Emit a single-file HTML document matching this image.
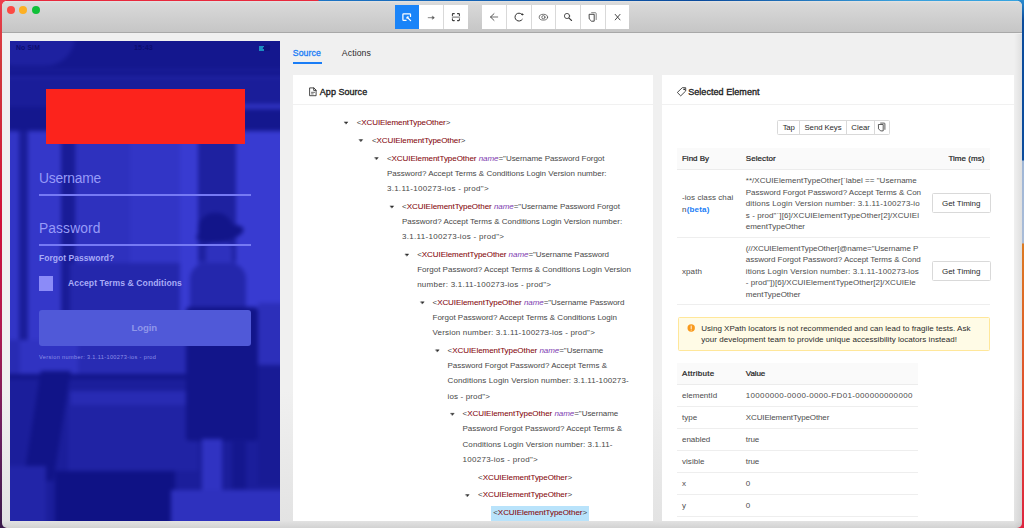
<!DOCTYPE html>
<html lang="en">
<head>
<meta charset="utf-8">
<title>Appium Inspector</title>
<style>
*{box-sizing:border-box;margin:0;padding:0}
html,body{width:1024px;height:528px;overflow:hidden}
body{position:relative;font-family:"Liberation Sans",sans-serif;background:#c8283c}
.abs,.l{position:absolute}
.l{white-space:nowrap}
.desk-l{left:0;top:0;width:6px;height:528px;background:linear-gradient(#ec3c4c 0,#d03a3c 12%,#d0103a 42%,#b01a50 62%,#6a2060 82%,#3a1a4a 100%)}
.desk-t{left:0;top:0;width:1024px;height:4px;background:linear-gradient(90deg,#e8283c 0,#e8283c 318px,#1c74c4 319px,#0a4a9c 700px,#3aa0dc 900px,#35a4e0 100%)}
.desk-r{right:0;top:0;width:6px;height:528px;background:linear-gradient(#2a8cd0 0,#0b4c9c 20px,#0b4c9c 160px,#9fb6d6 161px,#a9bcd8 243px,#dc7a22 244px,#e0552c 380px,#de2440 100%)}
.win{left:2px;top:1px;width:1020px;height:527px;border-radius:5px 5px 5px 5px;background:linear-gradient(#f0f0f0 0,#f0f0f0 74%,#e3e3e3 98.6%,#d2d2d2 100%);overflow:hidden}
.tb{left:0;top:0;width:1020px;height:32px;background:linear-gradient(#e3e3e3 0,#d9d9d9 2px,#c6c6c6 100%);border-bottom:1px solid #a8a8a8}
.dot{width:8px;height:8px;border-radius:50%;top:5px}
.btn{top:4px;height:24px;background:#fff;border-right:1px solid #d9d9d9}
.card{background:#fff}
.hr{height:1px;background:#eee}
.botshade{left:0;top:520px;width:1020px;height:8px;background:linear-gradient(#e4e4e4,#d0d0d0)}
.gt{width:59.2px;height:20px;border:1px solid #d9d9d9;border-radius:1.5px;background:#fff}
.c-blue{color:#1a7df6;-webkit-text-stroke:.3px #1a7df6}
.c-dk{color:#2b2b2b}
.c-hd{color:#1f1f1f;-webkit-text-stroke:.35px #1f1f1f}
.c-th{color:#1f1f1f;-webkit-text-stroke:.22px #1f1f1f}
.c-p{color:#4d4d4d}
.c-ph1{color:#979bf8}
.c-ph2{color:#a9abf6;font-weight:700}
.c-ph3{color:#8f96ea;font-weight:700}
.c-ph4{color:#8d90e8}
.c-ph5{color:#0c0c72;font-weight:700}
.s-p{color:#474747}
.s-t{color:#86090f;-webkit-text-stroke:.08px #86090f}
.s-a{color:#7d3bb0;font-style:italic}
.s-beta{color:#1a7df6;font-weight:700}
</style>
</head>
<body>
<div class="abs desk-t"></div>
<div class="abs desk-l"></div>
<div class="abs desk-r"></div>
<div class="abs win">
  <div class="abs tb"></div>
  <div class="abs dot" style="left:4.5px;background:#fc4a44"></div>
  <div class="abs dot" style="left:17.4px;background:#fdb024"></div>
  <div class="abs dot" style="left:29.8px;background:#10c038"></div>
  <!-- toolbar group 1 -->
  <div class="abs btn" style="left:392.5px;width:24.2px;background:#1a84f8;border-color:#1a84f8"></div>
  <div class="abs btn" style="left:416.7px;width:25px"></div>
  <div class="abs btn" style="left:441.7px;width:24.4px;border-right:0"></div>
  <!-- toolbar group 2 -->
  <div class="abs btn" style="left:479.7px;width:25.3px"></div>
  <div class="abs btn" style="left:505px;width:24.6px"></div>
  <div class="abs btn" style="left:529.6px;width:24.2px"></div>
  <div class="abs btn" style="left:553.8px;width:25.1px"></div>
  <div class="abs btn" style="left:578.9px;width:24.8px"></div>
  <div class="abs btn" style="left:603.7px;width:23.8px;border-right:0"></div>
  <!--ICONS-->
    <div class="abs" style="left:1012px;top:33px;width:8px;height:494px;background:linear-gradient(90deg,rgba(0,0,0,0),rgba(0,0,0,.07))"></div>
  <!-- phone -->
  <div class="abs" id="phone" style="left:8px;top:40px;width:270px;height:480px;background:#1a1d99;overflow:hidden">
<div class="abs" style="left:0;top:0;width:270px;height:480px;filter:blur(2.2px)"><div class="abs" style="left:-10px;top:-10px;width:290px;height:39px;background:#14178e;"></div><div class="abs" style="left:-5px;top:-5px;width:70px;height:30px;background:#1e21a0;border-radius:0 0 40px 10px"></div><div class="abs" style="left:-10px;top:29px;width:290px;height:8px;background:#2023a4;"></div><div class="abs" style="left:-10px;top:31px;width:290px;height:2.5px;background:#0e1183;"></div><div class="abs" style="left:-10px;top:37px;width:290px;height:29px;background:#1a1d99;"></div><div class="abs" style="left:-10px;top:66px;width:290px;height:24px;background:#14178e;"></div><div class="abs" style="left:150px;top:63px;width:130px;height:5px;background:#3033c2;"></div><div class="abs" style="left:-10px;top:90px;width:290px;height:213px;background:#282bb3;"></div><div class="abs" style="left:-10px;top:90px;width:20px;height:250px;background:#3235c6;"></div><div class="abs" style="left:9px;top:90px;width:9px;height:300px;background:#1a1d99;"></div><div class="abs" style="left:18px;top:90px;width:33px;height:250px;background:#3437c9;"></div><div class="abs" style="left:51px;top:90px;width:14px;height:215px;background:#191c97;"></div><div class="abs" style="left:66px;top:96px;width:104px;height:170px;background:#2e31be;"></div><div class="abs" style="left:120px;top:100px;width:52px;height:150px;background:#3235c6;"></div><div class="abs" style="left:60px;top:222px;width:112px;height:78px;background:#2427ac;"></div><div class="abs" style="left:170px;top:90px;width:18px;height:200px;background:#383bd1;"></div><div class="abs" style="left:188px;top:90px;width:38px;height:130px;background:#1e21a0;"></div><div class="abs" style="left:226px;top:90px;width:54px;height:190px;background:#383bd1;"></div><div class="abs" style="left:186px;top:184px;width:48px;height:17px;background:#12158a;border-radius:50%;transform:rotate(-10deg)"></div><div class="abs" style="left:188px;top:172px;width:35px;height:26px;background:#12158a;border-radius:16px 16px 2px 2px"></div><div class="abs" style="left:196px;top:202px;width:26px;height:22px;background:#2e31be;border-radius:6px"></div><div class="abs" style="left:-10px;top:299px;width:290px;height:36px;background:#282bb3;"></div><div class="abs" style="left:10px;top:299px;width:58px;height:36px;background:#3033c2;"></div><div class="abs" style="left:-10px;top:333px;width:200px;height:5px;background:#12158a;"></div><div class="abs" style="left:-10px;top:338px;width:290px;height:160px;background:#1b1e9b;"></div><div class="abs" style="left:60px;top:350px;width:125px;height:14px;background:#282bb3;"></div><div class="abs" style="left:58px;top:364px;width:130px;height:66px;background:#2023a4;"></div><div class="abs" style="left:45px;top:430px;width:120px;height:60px;background:#0f1285;"></div><div class="abs" style="left:22px;top:330px;width:30px;height:110px;background:#111488;transform:skewX(-9deg)"></div><div class="abs" style="left:-10px;top:425px;width:46px;height:70px;background:#2225a8;"></div><div class="abs" style="left:180px;top:222px;width:56px;height:60px;background:#2427ac;border-radius:16px 16px 0 0"></div><div class="abs" style="left:176px;top:266px;width:72px;height:134px;background:#12158a;border-radius:4px"></div><div class="abs" style="left:228px;top:300px;width:20px;height:60px;background:#12158a;"></div><div class="abs" style="left:192px;top:398px;width:20px;height:55px;background:#3033c2;"></div><div class="abs" style="left:222px;top:398px;width:14px;height:50px;background:#14178e;"></div><div class="abs" style="left:161px;top:449px;width:125px;height:45px;background:#2e31be;"></div><div class="abs" style="left:248px;top:262px;width:40px;height:62px;background:#2c2fba;"></div><div class="abs" style="left:248px;top:324px;width:40px;height:120px;background:#181b95;"></div></div><div class="abs" style="left:36px;top:47.8px;width:199.2px;height:54.9px;background:#fc231c;"></div><div class="abs" style="left:29px;top:152.6px;width:211.6px;height:2px;background:#767af4;"></div><div class="abs" style="left:29px;top:202.6px;width:211.6px;height:2px;background:#767af4;"></div><div class="abs" style="left:29px;top:235.4px;width:14.2px;height:14.2px;background:#8b8bf8;"></div><div class="abs" style="left:28.5px;top:269px;width:212.2px;height:36.2px;background:#5059d8;border-radius:3px"></div><div class="abs" style="left:252.5px;top:4.3px;width:7px;height:5.6px;background:#10127e;border-radius:1.2px"></div><div class="abs" style="left:249.3px;top:4.6px;width:4.6px;height:5px;background:#1b8cc2;"></div><div class="abs" style="left:252.6px;top:6px;width:1.6px;height:2.2px;background:#10127e;transform:skewX(-20deg)"></div>
  </div>
  <!-- tab underline -->
  <div class="abs" style="left:290.7px;top:61.1px;width:29.2px;height:2px;background:#1a7df6"></div>
  <!-- cards -->
  <div class="abs card" style="left:291px;top:73.5px;width:360px;height:446.5px"></div>
  <div class="abs hr" style="left:291px;top:103px;width:360px;background:#f1f1f1"></div>
  <div class="abs card" style="left:660px;top:73.5px;width:352px;height:446.5px"></div>
  <div class="abs hr" style="left:660px;top:103px;width:352px;background:#f1f1f1"></div>
  
<div class="abs" id="ov" style="left:-2px;top:-1px;width:1024px;height:528px">
  <!-- action button group -->
  <div class="abs" style="left:777.2px;top:120px;width:112.4px;height:14.6px;border:1px solid #d9d9d9;border-radius:1.5px;background:#fff"></div>
  <div class="abs" style="left:799.3px;top:120px;width:1px;height:14.6px;background:#d9d9d9"></div>
  <div class="abs" style="left:846.2px;top:120px;width:1px;height:14.6px;background:#d9d9d9"></div>
  <div class="abs" style="left:874.2px;top:120px;width:1px;height:14.6px;background:#d9d9d9"></div>
  <!-- selector table -->
  <div class="abs" style="left:677px;top:148px;width:312.5px;height:21.5px;background:#fafafa;border-bottom:1px solid #ececec"></div>
  <div class="abs hr" style="left:677px;top:236.8px;width:312.5px"></div>
  <div class="abs hr" style="left:677px;top:304.2px;width:312.5px"></div>
  <div class="abs gt" style="left:931.5px;top:193.2px"></div>
  <div class="abs gt" style="left:931.5px;top:261.4px"></div>
  <!-- alert -->
  <div class="abs" style="left:677.5px;top:317px;width:312px;height:33.6px;background:#fffbe6;border:1px solid #ffe79a;border-radius:1.5px"></div>
  <!-- attribute table -->
  <div class="abs" style="left:677px;top:362.5px;width:241px;height:22px;background:#fafafa;border-bottom:1px solid #ececec"></div>
  <div class="abs hr" style="left:677px;top:405.8px;width:241px"></div>
  <div class="abs hr" style="left:677px;top:427.8px;width:241px"></div>
  <div class="abs hr" style="left:677px;top:449.8px;width:241px"></div>
  <div class="abs hr" style="left:677px;top:471.8px;width:241px"></div>
  <div class="abs hr" style="left:677px;top:493.8px;width:241px"></div>
  <div class="abs hr" style="left:677px;top:515.8px;width:241px"></div>
  <!-- selected tree node -->
  <div class="abs" style="left:491.2px;top:505.5px;width:98.3px;height:15.5px;background:#b9e3fb"></div>
</div>

</div>
<div class="abs" id="txt" style="left:0;top:0;width:1024px;height:528px">
<svg class="abs" style="left:0;top:0" width="1024" height="528" viewBox="0 0 1024 528" fill="none" stroke-linecap="round" stroke-linejoin="round">
<g fill="#2e2e2e" stroke="#2e2e2e" stroke-width=".45"><path d="M344.50 121.90H347.90L346.20 123.90Z"/><path d="M359.30 139.60H362.70L361.00 141.60Z"/><path d="M374.90 157.60H378.30L376.60 159.60Z"/><path d="M390.30 205.90H393.70L392.00 207.90Z"/><path d="M405.30 254.00H408.70L407.00 256.00Z"/><path d="M420.80 301.80H424.20L422.50 303.80Z"/><path d="M435.80 349.80H439.20L437.50 351.80Z"/><path d="M450.80 413.30H454.20L452.50 415.30Z"/><path d="M465.80 494.60H469.20L467.50 496.60Z"/></g>
<g stroke="#fff" stroke-width="1.25"><path d="M406 20.4H403.6Q402.9 20.4 402.9 19.7V14.5Q402.9 13.8 403.6 13.8H409.8Q410.5 13.8 410.5 14.5V16.4"/><path d="M407.2 17.2L410.6 20.6"/><path d="M407 18.6V17H408.6" stroke-width=".9"/></g>
<g stroke="#666" stroke-width=".8"><path d="M428.2 17.7H433.6"/><path d="M432.6 16.3L434.4 17.7L432.6 19.1Z" fill="#555" stroke="#555" stroke-width=".5"/></g>
<g stroke="#3a3a3a" stroke-width="1.05"><path d="M452.4 15.4V14.2Q452.4 13.6 453 13.6H454.3"/><path d="M457.5 13.6H458.8Q459.4 13.6 459.4 14.2V15.4"/><path d="M452.4 18.8V20Q452.4 20.6 453 20.6H454.3"/><path d="M457.5 20.6H458.8Q459.4 20.6 459.4 20V18.8"/><path d="M452.2 17.1H459.7" stroke="#888"/></g>
<g stroke="#3a3a3a" stroke-width=".85"><path d="M490.6 17H497.7" stroke="#555"/><path d="M494 13.7L490.5 17L494 20.4"/></g>
<g stroke="#333" stroke-width="1"><path d="M522.3 19.4A4 4 0 1 1 521.9 14.3"/><circle cx="522.3" cy="14.4" r=".55" fill="#333"/></g>
<g stroke="#4a4a4a" stroke-width=".75"><ellipse cx="543.4" cy="17.2" rx="4.2" ry="2.9"/><circle cx="543.4" cy="17.2" r="1.6"/></g>
<g stroke="#3a3a3a" stroke-width=".85"><circle cx="567" cy="16" r="2.6"/><path d="M569 18.1L571.6 20.5" stroke-width="1.1"/></g>
<g stroke="#333" stroke-width=".9"><path d="M591.6 12.7H595.4Q596.2 12.7 596.2 13.5V19.6" stroke="#777"/><path d="M589.5 14.3H594.2V21.2H591.5L589.5 19.2Z"/></g>
<g stroke="#333" stroke-width=".9"><path d="M615.2 14.4L620 19.9M620 14.4L615.2 19.9"/></g>
<g stroke="#2a2a2a" stroke-width=".85"><path d="M310 87.9H313.9L316.1 90.1V95.7H310Z"/><path d="M313.7 88V90.4H316"/><path d="M311.5 92.3H314.6M311.5 93.9H313.2" stroke-width=".7"/></g>
<g stroke="#2a2a2a" stroke-width=".85"><path d="M677.6 92.2L682.3 87.7H685.7V91L681 95.6Z"/><circle cx="684.1" cy="89.3" r=".5"/></g>
<g stroke="#333" stroke-width=".8"><path d="M880.6 123.1H884.2Q884.9 123.1 884.9 123.8V129.4"/><path d="M878.8 124.5H883.2V130.9H880.6L878.8 129.1Z"/></g>
<circle cx="691.2" cy="328" r="3.7" fill="#f99a1c"/><path d="M691.2 326V328.6" stroke="#fff" stroke-width=".9"/><circle cx="691.2" cy="330" r=".5" fill="#fff"/>
</svg>
<div class="l c-tr" style="left:356.70px;top:117.00px;font-size:8.0px;line-height:12px;letter-spacing:-0.075px"><span class="s-p">&lt;</span><span class="s-t">XCUIElementTypeOther</span><span class="s-p">&gt;</span></div>
<div class="l c-tr" style="left:372.00px;top:134.80px;font-size:8.0px;line-height:12px;letter-spacing:-0.084px"><span class="s-p">&lt;</span><span class="s-t">XCUIElementTypeOther</span><span class="s-p">&gt;</span></div>
<div class="l c-tr" style="left:386.90px;top:152.70px;font-size:8.0px;line-height:12px;letter-spacing:-0.045px"><span class="s-p">&lt;</span><span class="s-t">XCUIElementTypeOther</span><span> </span><span class="s-a">name</span><span class="s-p">="Username Password Forgot</span></div>
<div class="l c-tr" style="left:386.90px;top:167.50px;font-size:8.0px;line-height:12px;letter-spacing:0.003px"><span class="s-p">Password? Accept Terms &amp; Conditions Login Version number:</span></div>
<div class="l c-tr" style="left:386.90px;top:182.80px;font-size:8.0px;line-height:12px;letter-spacing:0.287px"><span class="s-p">3.1.11-100273-ios - prod"&gt;</span></div>
<div class="l c-tr" style="left:402.00px;top:200.60px;font-size:8.0px;line-height:12px;letter-spacing:-0.039px"><span class="s-p">&lt;</span><span class="s-t">XCUIElementTypeOther</span><span> </span><span class="s-a">name</span><span class="s-p">="Username Password Forgot</span></div>
<div class="l c-tr" style="left:402.00px;top:215.80px;font-size:8.0px;line-height:12px;letter-spacing:0.012px"><span class="s-p">Password? Accept Terms &amp; Conditions Login Version number:</span></div>
<div class="l c-tr" style="left:402.00px;top:231.00px;font-size:8.0px;line-height:12px;letter-spacing:0.299px"><span class="s-p">3.1.11-100273-ios - prod"&gt;</span></div>
<div class="l c-tr" style="left:417.20px;top:248.70px;font-size:8.0px;line-height:12px;letter-spacing:-0.060px"><span class="s-p">&lt;</span><span class="s-t">XCUIElementTypeOther</span><span> </span><span class="s-a">name</span><span class="s-p">="Username Password</span></div>
<div class="l c-tr" style="left:417.20px;top:263.90px;font-size:8.0px;line-height:12px;letter-spacing:0.009px"><span class="s-p">Forgot Password? Accept Terms &amp; Conditions Login Version</span></div>
<div class="l c-tr" style="left:417.20px;top:279.30px;font-size:8.0px;line-height:12px;letter-spacing:0.234px"><span class="s-p">number: 3.1.11-100273-ios - prod"&gt;</span></div>
<div class="l c-tr" style="left:432.50px;top:296.50px;font-size:8.0px;line-height:12px;letter-spacing:-0.061px"><span class="s-p">&lt;</span><span class="s-t">XCUIElementTypeOther</span><span> </span><span class="s-a">name</span><span class="s-p">="Username Password</span></div>
<div class="l c-tr" style="left:432.50px;top:311.80px;font-size:8.0px;line-height:12px;letter-spacing:0.002px"><span class="s-p">Forgot Password? Accept Terms &amp; Conditions Login</span></div>
<div class="l c-tr" style="left:432.50px;top:327.00px;font-size:8.0px;line-height:12px;letter-spacing:0.178px"><span class="s-p">Version number: 3.1.11-100273-ios - prod"&gt;</span></div>
<div class="l c-tr" style="left:447.50px;top:344.50px;font-size:8.0px;line-height:12px;letter-spacing:-0.039px"><span class="s-p">&lt;</span><span class="s-t">XCUIElementTypeOther</span><span> </span><span class="s-a">name</span><span class="s-p">="Username</span></div>
<div class="l c-tr" style="left:447.50px;top:359.70px;font-size:8.0px;line-height:12px;letter-spacing:-0.011px"><span class="s-p">Password Forgot Password? Accept Terms &amp;</span></div>
<div class="l c-tr" style="left:447.50px;top:375.10px;font-size:8.0px;line-height:12px;letter-spacing:0.112px"><span class="s-p">Conditions Login Version number: 3.1.11-100273-</span></div>
<div class="l c-tr" style="left:447.50px;top:390.50px;font-size:8.0px;line-height:12px;letter-spacing:0.137px"><span class="s-p">ios - prod"&gt;</span></div>
<div class="l c-tr" style="left:462.50px;top:408.00px;font-size:8.0px;line-height:12px;letter-spacing:-0.039px"><span class="s-p">&lt;</span><span class="s-t">XCUIElementTypeOther</span><span> </span><span class="s-a">name</span><span class="s-p">="Username</span></div>
<div class="l c-tr" style="left:462.50px;top:423.20px;font-size:8.0px;line-height:12px;letter-spacing:-0.011px"><span class="s-p">Password Forgot Password? Accept Terms &amp;</span></div>
<div class="l c-tr" style="left:462.50px;top:438.50px;font-size:8.0px;line-height:12px;letter-spacing:0.085px"><span class="s-p">Conditions Login Version number: 3.1.11-</span></div>
<div class="l c-tr" style="left:462.50px;top:453.80px;font-size:8.0px;line-height:12px;letter-spacing:0.278px"><span class="s-p">100273-ios - prod"&gt;</span></div>
<div class="l c-tr" style="left:478.00px;top:471.50px;font-size:8.0px;line-height:12px;letter-spacing:-0.053px"><span class="s-p">&lt;</span><span class="s-t">XCUIElementTypeOther</span><span class="s-p">&gt;</span></div>
<div class="l c-tr" style="left:478.00px;top:489.30px;font-size:8.0px;line-height:12px;letter-spacing:-0.053px"><span class="s-p">&lt;</span><span class="s-t">XCUIElementTypeOther</span><span class="s-p">&gt;</span></div>
<div class="l c-tr" style="left:493.25px;top:507.00px;font-size:8.0px;line-height:12px;letter-spacing:-0.064px"><span class="s-p">&lt;</span><span class="s-t">XCUIElementTypeOther</span><span class="s-p">&gt;</span></div>
<div class="l c-blue" style="left:292.70px;top:46.60px;font-size:8.7px;line-height:12px;letter-spacing:0.145px"><span>Source</span></div>
<div class="l c-dk" style="left:341.80px;top:46.60px;font-size:8.7px;line-height:12px;letter-spacing:0.100px"><span>Actions</span></div>
<div class="l c-hd" style="left:319.80px;top:86.00px;font-size:9.0px;line-height:12px;letter-spacing:0.037px"><span>App Source</span></div>
<div class="l c-hd" style="left:688.20px;top:86.00px;font-size:9.0px;line-height:12px;letter-spacing:0.053px"><span>Selected Element</span></div>
<div class="l c-dk" style="left:782.75px;top:122.00px;font-size:7.8px;line-height:12px;letter-spacing:-0.276px"><span>Tap</span></div>
<div class="l c-dk" style="left:804.50px;top:122.00px;font-size:7.8px;line-height:12px;letter-spacing:-0.080px"><span>Send Keys</span></div>
<div class="l c-dk" style="left:851.25px;top:122.00px;font-size:7.8px;line-height:12px;letter-spacing:0.022px"><span>Clear</span></div>
<div class="l c-th" style="left:682.00px;top:152.90px;font-size:8.0px;line-height:12px;letter-spacing:-0.018px"><span>Find By</span></div>
<div class="l c-th" style="left:745.75px;top:152.90px;font-size:8.0px;line-height:12px;letter-spacing:0.080px"><span>Selector</span></div>
<div class="l c-th" style="left:948.40px;top:152.90px;font-size:8.0px;line-height:12px;letter-spacing:0.044px"><span>Time (ms)</span></div>
<div class="l c-p" style="left:682.00px;top:192.45px;font-size:8.0px;line-height:12px;letter-spacing:0.067px"><span>-ios class chai</span></div>
<div class="l c-p" style="left:682.00px;top:203.70px;font-size:8.0px;line-height:12px;letter-spacing:0.181px"><span class="s-p">n</span><span class="s-beta">(beta)</span></div>
<div class="l c-p" style="left:745.75px;top:174.95px;font-size:8.0px;line-height:12px;letter-spacing:0.034px"><span>**/XCUIElementTypeOther[`label == "Username</span></div>
<div class="l c-p" style="left:745.75px;top:186.50px;font-size:8.0px;line-height:12px;letter-spacing:-0.036px"><span>Password Forgot Password? Accept Terms &amp; Con</span></div>
<div class="l c-p" style="left:745.75px;top:198.00px;font-size:8.0px;line-height:12px;letter-spacing:0.142px"><span>ditions Login Version number: 3.1.11-100273-io</span></div>
<div class="l c-p" style="left:745.75px;top:209.50px;font-size:8.0px;line-height:12px;letter-spacing:0.094px"><span>s - prod"`][6]/XCUIElementTypeOther[2]/XCUIEl</span></div>
<div class="l c-p" style="left:745.75px;top:221.00px;font-size:8.0px;line-height:12px;letter-spacing:-0.025px"><span>ementTypeOther</span></div>
<div class="l c-dk" style="left:942.00px;top:197.90px;font-size:8.0px;line-height:12px;letter-spacing:-0.029px"><span>Get Timing</span></div>
<div class="l c-p" style="left:682.00px;top:265.90px;font-size:8.0px;line-height:12px;letter-spacing:0.084px"><span>xpath</span></div>
<div class="l c-p" style="left:745.75px;top:242.95px;font-size:8.0px;line-height:12px;letter-spacing:-0.067px"><span>(//XCUIElementTypeOther[@name="Username P</span></div>
<div class="l c-p" style="left:745.75px;top:254.40px;font-size:8.0px;line-height:12px;letter-spacing:-0.021px"><span>assword Forgot Password? Accept Terms &amp; Cond</span></div>
<div class="l c-p" style="left:745.75px;top:265.80px;font-size:8.0px;line-height:12px;letter-spacing:0.134px"><span>itions Login Version number: 3.1.11-100273-ios</span></div>
<div class="l c-p" style="left:745.75px;top:277.10px;font-size:8.0px;line-height:12px;letter-spacing:0.060px"><span>- prod"])[6]/XCUIElementTypeOther[2]/XCUIEle</span></div>
<div class="l c-p" style="left:745.75px;top:288.50px;font-size:8.0px;line-height:12px;letter-spacing:-0.030px"><span>mentTypeOther</span></div>
<div class="l c-dk" style="left:942.00px;top:265.90px;font-size:8.0px;line-height:12px;letter-spacing:-0.029px"><span>Get Timing</span></div>
<div class="l c-dk" style="left:701.25px;top:322.70px;font-size:8.0px;line-height:12px;letter-spacing:0.033px"><span>Using XPath locators is not recommended and can lead to fragile tests. Ask</span></div>
<div class="l c-dk" style="left:701.25px;top:334.20px;font-size:8.0px;line-height:12px;letter-spacing:0.044px"><span>your development team to provide unique accessibility locators instead!</span></div>
<div class="l c-th" style="left:682.00px;top:367.70px;font-size:8.0px;line-height:12px;letter-spacing:0.300px"><span>Attribute</span></div>
<div class="l c-th" style="left:745.75px;top:367.70px;font-size:8.0px;line-height:12px;letter-spacing:-0.075px"><span>Value</span></div>
<div class="l c-p" style="left:682.00px;top:389.95px;font-size:8.0px;line-height:12px;letter-spacing:0.012px"><span>elementId</span></div>
<div class="l c-p" style="left:745.75px;top:389.95px;font-size:8.0px;line-height:12px;letter-spacing:0.339px"><span>10000000-0000-0000-FD01-000000000000</span></div>
<div class="l c-p" style="left:682.00px;top:411.95px;font-size:8.0px;line-height:12px;letter-spacing:0.031px"><span>type</span></div>
<div class="l c-p" style="left:745.75px;top:411.95px;font-size:8.0px;line-height:12px;letter-spacing:-0.116px"><span>XCUIElementTypeOther</span></div>
<div class="l c-p" style="left:682.00px;top:433.95px;font-size:8.0px;line-height:12px;letter-spacing:-0.033px"><span>enabled</span></div>
<div class="l c-p" style="left:745.75px;top:433.95px;font-size:8.0px;line-height:12px;letter-spacing:-0.074px"><span>true</span></div>
<div class="l c-p" style="left:682.00px;top:455.95px;font-size:8.0px;line-height:12px;letter-spacing:0.038px"><span>visible</span></div>
<div class="l c-p" style="left:745.75px;top:455.95px;font-size:8.0px;line-height:12px;letter-spacing:-0.074px"><span>true</span></div>
<div class="l c-p" style="left:682.00px;top:477.95px;font-size:8.0px;line-height:12px;letter-spacing:0.000px"><span>x</span></div>
<div class="l c-p" style="left:745.75px;top:477.95px;font-size:8.0px;line-height:12px;letter-spacing:-0.003px"><span>0</span></div>
<div class="l c-p" style="left:682.00px;top:499.95px;font-size:8.0px;line-height:12px;letter-spacing:0.000px"><span>y</span></div>
<div class="l c-p" style="left:745.75px;top:499.95px;font-size:8.0px;line-height:12px;letter-spacing:-0.003px"><span>0</span></div>
<div class="l c-ph1" style="left:39.00px;top:169.60px;font-size:13.8px;line-height:18px;letter-spacing:-0.207px"><span>Username</span></div>
<div class="l c-ph1" style="left:39.00px;top:220.00px;font-size:13.8px;line-height:18px;letter-spacing:0.115px"><span>Password</span></div>
<div class="l c-ph2" style="left:39.00px;top:252.40px;font-size:8.5px;line-height:12px;letter-spacing:0.042px"><span>Forgot Password?</span></div>
<div class="l c-ph2" style="left:68.00px;top:277.30px;font-size:8.6px;line-height:12px;letter-spacing:0.074px"><span>Accept Terms &amp; Conditions</span></div>
<div class="l c-ph3" style="left:131.50px;top:321.00px;font-size:9.6px;line-height:14px;letter-spacing:-0.122px"><span>Login</span></div>
<div class="l c-ph4" style="left:39.00px;top:353.00px;font-size:5.6px;line-height:8px;letter-spacing:0.354px"><span>Version number: 3.1.11-100273-ios - prod</span></div>
<div class="l c-ph5" style="left:134.00px;top:42.50px;font-size:7.2px;line-height:10px;letter-spacing:0.122px"><span>15:43</span></div>
<div class="l c-ph5" style="left:16.00px;top:42.50px;font-size:6.8px;line-height:10px;letter-spacing:0.159px"><span>No SIM</span></div>
</div>
</body>
</html>
